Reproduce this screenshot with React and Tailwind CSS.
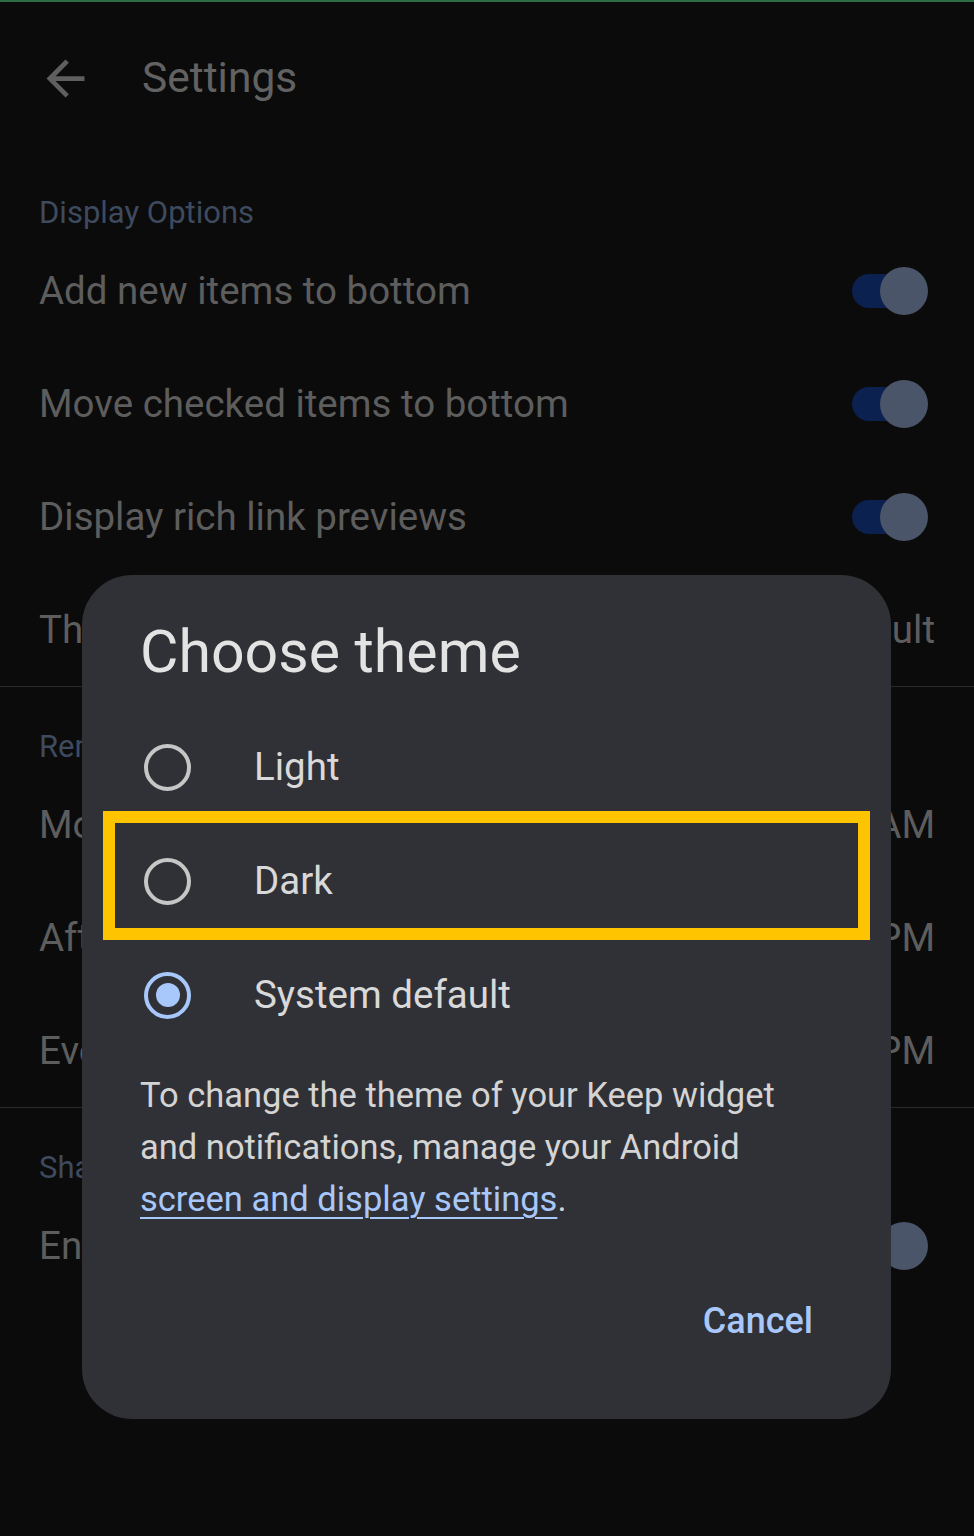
import React, { useState } from 'react';

const FONT = { fontFamily: 'Roboto, "Noto Sans", sans-serif' };

const displayRows = [
  { label: 'Add new items to bottom', on: true },
  { label: 'Move checked items to bottom', on: true },
  { label: 'Display rich link previews', on: true },
];

const reminderRows = [
  { label: 'Morning', value: '8:00 AM' },
  { label: 'Afternoon', value: '1:00 PM' },
  { label: 'Evening', value: '6:00 PM' },
];

const themes = ['Light', 'Dark', 'System default'];

const Toggle = () => (
  <div className="relative w-[76px] h-[48px] flex items-center">
    <div className="w-[72px] h-[34px] rounded-full bg-[#0b2150]" />
    <div className="absolute right-0 top-0 w-[48px] h-[48px] rounded-full bg-[#4a5569]" />
  </div>
);

const SectionHeader = ({ children }) => (
  <div className="pt-[45px] px-[39px] h-[75px] text-[31px] leading-[30px] text-[#3e4a5e]">
    {children}
  </div>
);

const Row = ({ label, right }) => (
  <div className="h-[113px] flex items-center justify-between pl-[39px] pr-[39px] text-[38.5px] text-[#5d5d5d]">
    <span>{label}</span>
    {right}
  </div>
);

const Radio = ({ checked }) =>
  checked ? (
    <div className="w-[47px] h-[47px] rounded-full border-[4px] border-[#a8c7fa] flex items-center justify-center">
      <div className="w-[24px] h-[24px] rounded-full bg-[#a8c7fa]" />
    </div>
  ) : (
    <div className="w-[47px] h-[47px] rounded-full border-[4px] border-[#c6c6c6]" />
  );

const ThemeDialog = () => {
  const [theme, setTheme] = useState('System default');

  return (
    <div className="absolute left-[82px] top-[575px] w-[809px] h-[844px] rounded-[50px] bg-[#303136]">
      <h2 className="mt-[45px] pl-[58px] text-[59px] leading-[64px] text-[#e3e3e3]">Choose theme</h2>

      <div className="mt-[26px] mx-[21px]">
        {themes.map((t) => (
          <div
            key={t}
            onClick={() => setTheme(t)}
            className="relative h-[114px] flex items-center pl-[41px] text-[38.5px] text-[#d9d9d9]"
          >
            <Radio checked={theme === t} />
            <span className="ml-[63px]">{t}</span>
            {/* highlight frame around the Dark option */}
            {t === 'Dark' && (
              <div className="absolute left-0 right-0 top-[-13px] h-[129px] border-[12px] border-[#ffc400] pointer-events-none" />
            )}
          </div>
        ))}
      </div>

      <p className="mt-[17px] ml-[58px] w-[660px] text-[34.5px] leading-[52px] text-[#d4d4d4]">
        To change the theme of your Keep widget and notifications, manage your Android{' '}
        <a href="#" className="text-[#a8c7fa] underline underline-offset-[6px] decoration-2">
          screen and display settings
        </a>
        .
      </p>

      <div className="flex justify-end pr-[78px] mt-[76px]">
        <button className="text-[36px] leading-[40px] font-medium text-[#a8c7fa]">Cancel</button>
      </div>
    </div>
  );
};

export default function App() {
  return (
    <div className="relative w-[974px] h-[1536px] bg-[#0b0b0b] overflow-hidden" style={FONT}>
      <div className="h-[2px] bg-[#2f6e45]" />

      {/* top bar */}
      <div className="h-[152px] flex items-center pl-[37px]">
        <svg width="57" height="57" viewBox="0 0 24 24" fill="#5f5f5f">
          <path d="M20 11H7.83l5.59-5.59L12 4l-8 8 8 8 1.41-1.41L7.83 13H20v-2z" />
        </svg>
        <span className="ml-[48px] text-[42.5px] text-[#626262]">Settings</span>
      </div>

      <div className="pt-[44px] px-[39px] h-[74px] text-[31px] leading-[30px] text-[#3e4a5e]">
        Display Options
      </div>
      <div className="h-[6px]" />
      {displayRows.map((r) => (
        <Row key={r.label} label={r.label} right={<div className="mr-[7px]"><Toggle /></div>} />
      ))}
      <Row label="Theme" right={<span>System default</span>} />
      <div className="h-px bg-[#2a2a2a]" />

      <SectionHeader>Reminder defaults</SectionHeader>
      <div className="h-[6px]" />
      {reminderRows.map((r) => (
        <Row key={r.label} label={r.label} right={<span>{r.value}</span>} />
      ))}
      <div className="h-px bg-[#2a2a2a]" />

      <SectionHeader>Sharing</SectionHeader>
      <div className="h-[6px]" />
      <Row label="Enable sharing" right={<div className="mr-[7px]"><Toggle /></div>} />

      <ThemeDialog />
    </div>
  );
}
